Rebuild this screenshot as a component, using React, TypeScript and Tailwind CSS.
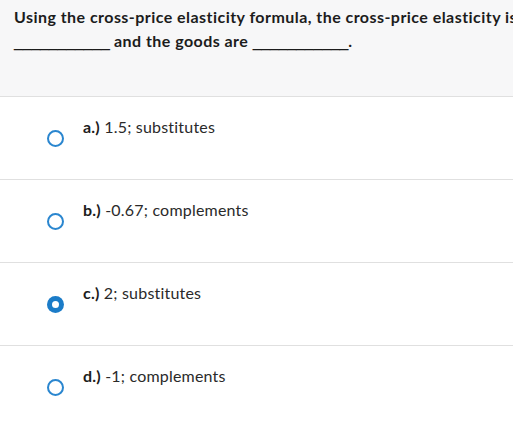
import React from "react";

// 選択肢データ
const options = [
  { label: "a.)", text: "1.5; substitutes", selected: false },
  { label: "b.)", text: "-0.67; complements", selected: false },
  { label: "c.)", text: "2; substitutes", selected: true },
  { label: "d.)", text: "-1; complements", selected: false },
];

function Radio({ selected }: { selected: boolean }) {
  if (selected) {
    return (
      <span className="flex h-[17px] w-[17px] items-center justify-center rounded-full bg-[#1b7cc8]">
        <span className="h-[7px] w-[7px] rounded-full bg-white" />
      </span>
    );
  }
  return <span className="block h-[17px] w-[17px] rounded-full border-2 border-[#2a86cf] bg-white" />;
}

// 空欄の下線はつながって見えるよう Liberation Sans で描く
function Blank() {
  return <span className="font-['Liberation_Sans',sans-serif] font-normal tracking-[-0.2px]">___________</span>;
}

export default function App() {
  return (
    <div className="w-[513px] h-[425px] overflow-hidden bg-white text-[#1c1c1c] font-['Lato',sans-serif]">
      <div className="h-[97px] bg-[#f7f7f8] border-b border-[#e0e0e0] pl-[14px] pt-[5px] text-[16px] font-bold leading-[24px] tracking-[0.45px]">
        <div className="whitespace-nowrap">
          Using the cross-price elasticity formula, the cross-price elasticity is
        </div>
        <div className="whitespace-nowrap">
          <Blank /> and the goods are <Blank />.
        </div>
      </div>
      {options.map((o) => (
        <div key={o.label} className="h-[83px] border-b border-[#e0e0e0] flex">
          <div className="pl-[47px] pt-[33px] w-[83px] shrink-0">
            <Radio selected={o.selected} />
          </div>
          <div className="pt-[18px] text-[16px] leading-[24px] tracking-[0.2px] whitespace-nowrap text-[#2a2a2a]">
            <span className="font-bold text-[#1c1c1c]">{o.label}</span> {o.text}
          </div>
        </div>
      ))}
    </div>
  );
}
